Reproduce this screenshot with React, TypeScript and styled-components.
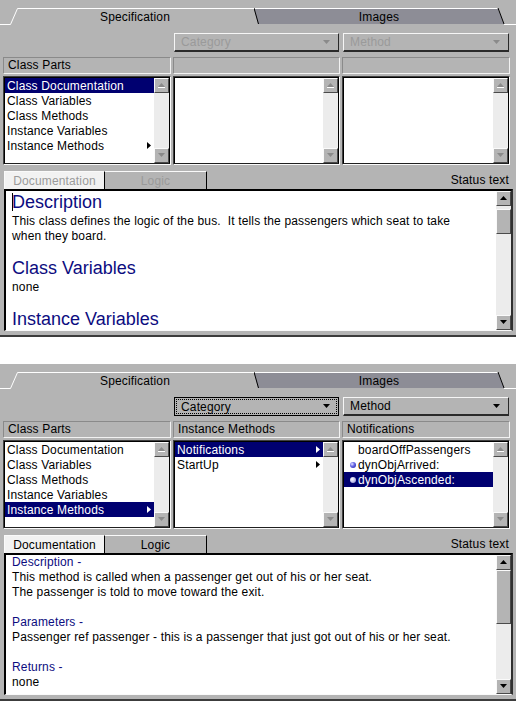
import React from "react";
import styled, { createGlobalStyle, css } from "styled-components";

const GlobalStyle = createGlobalStyle`
  html, body {
    margin: 0;
    padding: 0;
    background: #fff;
  }
  body {
    font-family: "Liberation Sans", Arial, sans-serif;
    font-size: 12px;
    letter-spacing: 0.15px;
    color: #000;
  }
`;

const colorTheme = {
  panel: "#b4b4b4",
  light: "#f6f6f6",
  shade: "#4a4a4a",
  select: "#000070",
  ink: "#0c0c80",
  track: "#ececec",
  muted: "#9a9a9a",
  tabBack: "#8d8d96",
};

type Item = {
  label: string;
  selected?: boolean;
  arrow?: boolean;
  icon?: boolean;
};

type PanelProps = {
  enabled: boolean;
  categoryFocus?: boolean;
  headers: [string, string, string];
  columns: [Item[], Item[], Item[]];
  iconColumn?: number;
  thumb: { top: number; size: number };
  children: React.ReactNode;
};

type ArrowDir = "up" | "down" | "right";

const Arrow = ({ dir, color }: { dir: ArrowDir; color: string }) => {
  if (dir === "right") {
    return (
      <svg width="4" height="7" viewBox="0 0 4 7">
        <polygon points="0,0 4,3.5 0,7" fill={color} />
      </svg>
    );
  }
  const points = dir === "up" ? "0,4 3.5,0 7,4" : "0,0 7,0 3.5,4";
  return (
    <svg width="7" height="5" viewBox="0 0 7 5">
      <polygon points={points} fill={color} />
      {color !== "#000" && dir === "up" && (
        <rect x="0" y="4" width="7" height="1" fill="#fff" />
      )}
    </svg>
  );
};

const ScrollBar = ({
  active,
  thumb,
}: {
  active: boolean;
  thumb?: { top: number; size: number };
}) => (
  <Bar>
    <ScrollButton>
      <Arrow dir="up" color={active ? "#000" : "#8a8a8a"} />
    </ScrollButton>
    <Track>{thumb && <Thumb $top={thumb.top} $size={thumb.size} />}</Track>
    <ScrollButton>
      <Arrow dir="down" color={active ? "#000" : "#8a8a8a"} />
    </ScrollButton>
  </Bar>
);

const BrowserPanel = ({
  enabled,
  categoryFocus,
  headers,
  columns,
  iconColumn,
  thumb,
  children,
}: PanelProps) => (
  <Panel>
    <TabStrip>
      <SpecTab>
        <TabShape width="254" height="26">
          <path d="M0 24.5H10.5L17.5 8.5H254" stroke="#fff" fill="none" />
        </TabShape>
        <TabLabel>Specification</TabLabel>
      </SpecTab>
      <ImagesTab>
        <TabShape width="262" height="26">
          <polygon points="0,9 244,9 250,24 4,24" fill={colorTheme.tabBack} />
          <path d="M0 8.5H244" stroke="#fff" />
          <path d="M0 8L4.5 24" stroke="#000" />
          <path d="M244 8L250 24" stroke="#000" />
          <path d="M250 24.5H262" stroke="#fff" />
        </TabShape>
        <TabLabel>Images</TabLabel>
      </ImagesTab>
    </TabStrip>

    <Columns>
      {columns.map((items, i) => (
        <Column key={i} $w={i === 1 ? 167 : 168}>
          <DropSlot>
            {i > 0 && (
              <Dropdown $focus={i === 1 && !!categoryFocus}>
                <DropFace
                  $enabled={enabled}
                  $focus={i === 1 && !!categoryFocus}
                >
                  <span>{i === 1 ? "Category" : "Method"}</span>
                  <Arrow dir="down" color={enabled ? "#000" : "#8a8a8a"} />
                </DropFace>
              </Dropdown>
            )}
          </DropSlot>
          <Header>{headers[i]}</Header>
          <List>
            <ListInner>
              <ListBody>
                {items.map((item) => (
                  <Row key={item.label} $selected={!!item.selected}>
                    {iconColumn === i && (
                      <IconSlot>
                        {item.icon && <Sphere $selected={!!item.selected} />}
                      </IconSlot>
                    )}
                    <RowLabel>{item.label}</RowLabel>
                    {item.arrow && (
                      <Arrow
                        dir="right"
                        color={item.selected ? "#fff" : "#000"}
                      />
                    )}
                  </Row>
                ))}
              </ListBody>
              <ScrollBar active={false} />
            </ListInner>
          </List>
        </Column>
      ))}
    </Columns>

    <DocBar>
      <DocTab $active $enabled={enabled} $first>
        Documentation
      </DocTab>
      <DocTab $active={false} $enabled={enabled} $wide>
        Logic
      </DocTab>
      <Status>Status text</Status>
    </DocBar>

    <TextArea>
      <Content>{children}</Content>
      <ScrollBar active thumb={thumb} />
    </TextArea>
  </Panel>
);

export default function App() {
  return (
    <>
      <GlobalStyle />
      <Page>
        <BrowserPanel
          enabled={false}
          headers={["Class Parts", "", ""]}
          columns={[
            [
              { label: "Class Documentation", selected: true },
              { label: "Class Variables" },
              { label: "Class Methods" },
              { label: "Instance Variables" },
              { label: "Instance Methods", arrow: true },
            ],
            [],
            [],
          ]}
          thumb={{ top: 3, size: 25 }}
        >
          <Heading>
            <Caret />
            Description
          </Heading>
          <Para>
            This class defines the logic of the bus.&nbsp; It tells the
            passengers which seat to take
            <br />
            when they board.
          </Para>
          <Heading>Class Variables</Heading>
          <Para>none</Para>
          <Heading>Instance Variables</Heading>
        </BrowserPanel>

        <BrowserPanel
          enabled
          categoryFocus
          headers={["Class Parts", "Instance Methods", "Notifications"]}
          iconColumn={2}
          columns={[
            [
              { label: "Class Documentation" },
              { label: "Class Variables" },
              { label: "Class Methods" },
              { label: "Instance Variables" },
              { label: "Instance Methods", arrow: true, selected: true },
            ],
            [
              { label: "Notifications", arrow: true, selected: true },
              { label: "StartUp", arrow: true },
            ],
            [
              { label: "boardOffPassengers" },
              { label: "dynObjArrived:", icon: true },
              { label: "dynObjAscended:", icon: true, selected: true },
            ],
          ]}
          thumb={{ top: 0, size: 54 }}
        >
          <DocSection>
            <DocLabel>Description -</DocLabel>
            <DocLine>
              This method is called when a passenger get out of his or her
              seat.
            </DocLine>
            <DocLine>The passenger is told to move toward the exit.</DocLine>
          </DocSection>
          <DocSection>
            <DocLabel>Parameters -</DocLabel>
            <DocLine>
              Passenger ref passenger - this is a passenger that just got out
              of his or her seat.
            </DocLine>
          </DocSection>
          <DocSection>
            <DocLabel>Returns -</DocLabel>
            <DocLine>none</DocLine>
          </DocSection>
        </BrowserPanel>
      </Page>
    </>
  );
}

const Page = styled.div`
  width: 516px;
  display: flex;
  flex-direction: column;
  gap: 27px;
`;

const Panel = styled.section`
  width: 516px;
  height: 337px;
  box-sizing: border-box;
  background-color: ${colorTheme.panel};
  border-bottom: 2px solid #3c3c3c;
  display: flex;
  flex-direction: column;
`;

const TabStrip = styled.div`
  display: flex;
  height: 26px;
`;

const MainTab = styled.div`
  position: relative;
  height: 26px;
  box-sizing: border-box;
  padding-top: 7px;
  display: flex;
  align-items: center;
  justify-content: center;
`;

const SpecTab = styled(MainTab)`
  width: 254px;
  padding-left: 16px;
`;

const ImagesTab = styled(MainTab)`
  flex: 1;
  padding-right: 12px;
`;

const TabShape = styled.svg`
  position: absolute;
  left: 0;
  top: 0;
`;

const TabLabel = styled.span`
  position: relative;
`;

const Columns = styled.div`
  display: flex;
  gap: 2px;
  padding-left: 3px;
  margin-top: 7px;
`;

const Column = styled.div<{ $w: number }>`
  width: ${(p) => p.$w}px;
  display: flex;
  flex-direction: column;
`;

const DropSlot = styled.div`
  height: 19px;
  margin-bottom: 5px;
  display: flex;
`;

const Dropdown = styled.div<{ $focus: boolean }>`
  flex: 1;
  margin: 0 1px;
  box-sizing: border-box;
  display: flex;
  border-style: solid;
  ${(p) =>
    p.$focus
      ? css`
          border-width: 1px;
          border-color: #000;
          padding: 1px;
        `
      : css`
          border-width: 1px 1px 2px 1px;
          border-color: ${colorTheme.light} #2a2a2a #2a2a2a ${colorTheme.light};
        `}
`;

const DropFace = styled.div<{ $enabled: boolean; $focus: boolean }>`
  flex: 1;
  display: flex;
  align-items: center;
  justify-content: space-between;
  padding: 0 8px 0 6px;
  color: ${(p) => (p.$enabled ? "#000" : colorTheme.muted)};
  ${(p) =>
    p.$focus &&
    css`
      border: 1px dotted #000;
      padding: 0 6px 0 4px;
    `}
`;

const Header = styled.div`
  height: 17px;
  box-sizing: border-box;
  border: 1px solid;
  border-color: #8a8a8a #f2f2f2 #f2f2f2 #8a8a8a;
  padding-left: 4px;
  line-height: 15px;
  white-space: nowrap;
  overflow: hidden;
`;

const List = styled.div`
  margin-top: 2px;
  height: 89px;
  box-sizing: border-box;
  border: 1px solid;
  border-color: #404040 #fafafa #fafafa #404040;
  display: flex;
  background-color: #fff;
`;

const ListInner = styled.div`
  flex: 1;
  min-width: 0;
  display: flex;
  border: 1px solid #000;
  border-bottom-color: #202020;
`;

const ListBody = styled.ul`
  flex: 1;
  min-width: 0;
  margin: 0;
  padding: 0;
  list-style: none;
  overflow: hidden;
`;

const Row = styled.li<{ $selected: boolean }>`
  display: flex;
  align-items: center;
  height: 15px;
  padding: 0 3px 0 2px;
  white-space: nowrap;
  background-color: ${(p) => (p.$selected ? colorTheme.select : "transparent")};
  color: ${(p) => (p.$selected ? "#fff" : "#000")};
`;

const RowLabel = styled.span`
  flex: 1;
`;

const IconSlot = styled.span`
  width: 12px;
  display: flex;
  align-items: center;
  padding-left: 4px;
  box-sizing: border-box;
`;

const Sphere = styled.span<{ $selected: boolean }>`
  width: 6px;
  height: 6px;
  border-radius: 50%;
  background: ${(p) =>
    p.$selected
      ? "radial-gradient(circle at 35% 35%, #fff 0, #c8c8f0 45%, #8080c0 100%)"
      : "radial-gradient(circle at 35% 35%, #e8e8ff 0, #6a6ae8 40%, #1a1a98 100%)"};
`;

const Bar = styled.div`
  width: 15px;
  flex-shrink: 0;
  display: flex;
  flex-direction: column;
  background-color: ${colorTheme.track};
`;

const raised = css`
  box-sizing: border-box;
  background-color: ${colorTheme.panel};
  border: 1px solid;
  border-color: #fafafa ${colorTheme.shade} ${colorTheme.shade} #fafafa;
`;

const ScrollButton = styled.div`
  ${raised};
  height: 15px;
  display: flex;
  align-items: center;
  justify-content: center;
`;

const Track = styled.div`
  flex: 1;
  position: relative;
`;

const Thumb = styled.div<{ $top: number; $size: number }>`
  ${raised};
  position: absolute;
  left: 0;
  right: 0;
  top: ${(p) => p.$top}px;
  height: ${(p) => p.$size}px;
`;

const DocBar = styled.div`
  display: flex;
  height: 18px;
  margin-top: 6px;
  padding: 0 7px 0 4px;
`;

const DocTab = styled.div<{
  $active: boolean;
  $enabled: boolean;
  $first?: boolean;
  $wide?: boolean;
}>`
  width: ${(p) => (p.$wide ? 102 : 101)}px;
  box-sizing: border-box;
  border-top: 1px solid #fafafa;
  border-right: 1px solid #000;
  border-left: ${(p) => (p.$first ? "1px solid #fafafa" : "none")};
  background-color: ${(p) => (p.$active ? "#f2f2f2" : "transparent")};
  color: ${(p) => (p.$enabled ? "#000" : colorTheme.muted)};
  display: flex;
  align-items: center;
  justify-content: center;
`;

const Status = styled.div`
  margin-left: auto;
  align-self: center;
`;

const TextArea = styled.div`
  height: 142px;
  margin: 0 3px 0 4px;
  box-sizing: border-box;
  border-style: solid;
  border-width: 2px 2px 1px 2px;
  border-color: #000 #303030 #fafafa #000;
  background-color: #fff;
  display: flex;
`;

const Content = styled.div`
  flex: 1;
  padding: 0 6px;
  overflow: hidden;
`;

const Heading = styled.h2`
  margin: -1px 0 0;
  font-weight: normal;
  font-size: 18px;
  line-height: 24px;
  letter-spacing: 0;
  color: ${colorTheme.ink};
`;

const Caret = styled.span`
  display: inline-block;
  width: 1px;
  height: 18px;
  margin-right: -1px;
  vertical-align: -3px;
  background-color: #000;
`;

const Para = styled.p`
  margin: 0 0 13px;
  line-height: 15px;
`;

const DocSection = styled.div`
  margin-bottom: 15px;
`;

const DocLabel = styled.div`
  line-height: 15px;
  color: ${colorTheme.ink};
`;

const DocLine = styled.div`
  line-height: 15px;
`;
